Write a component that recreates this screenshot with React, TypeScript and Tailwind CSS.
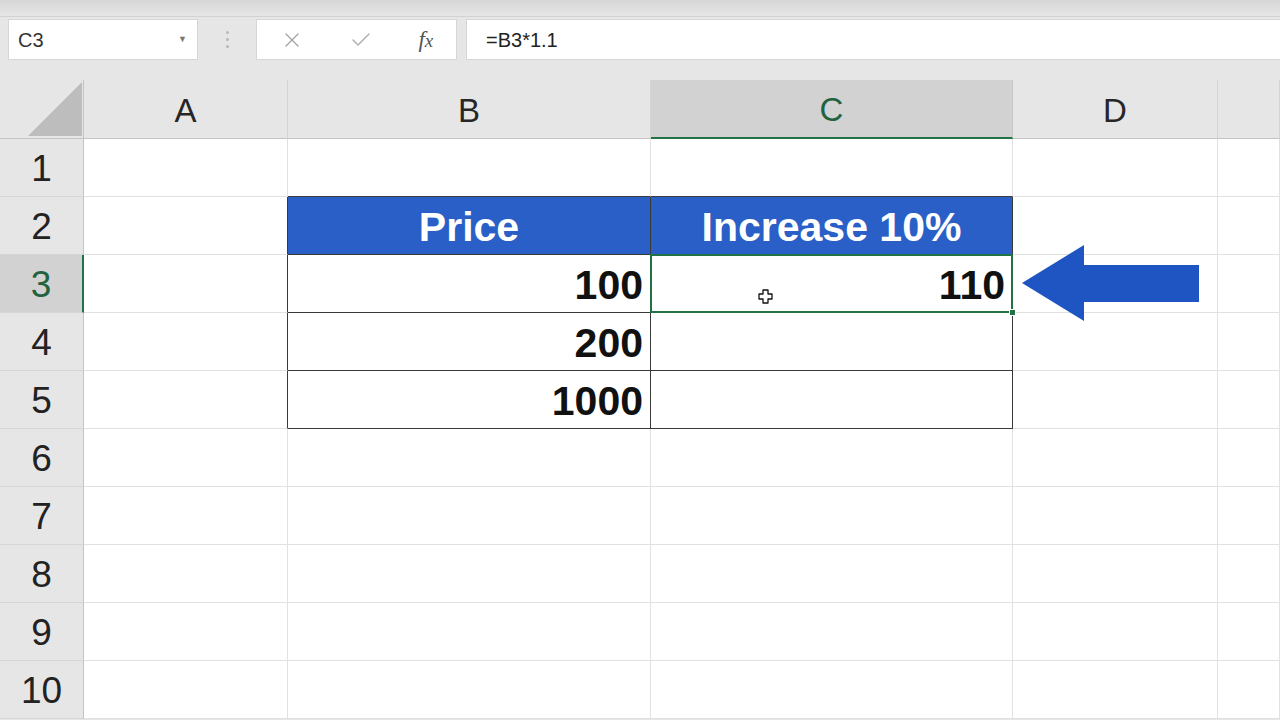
import React from 'react';
import clsx from 'clsx';
import { X, Check } from 'lucide-react';

const colLetters = ['A', 'B', 'C', 'D', ''];
const rows = [1, 2, 3, 4, 5, 6, 7, 8, 9, 10];

const values: Record<string, string> = {
    '2-2': 'Price',
    '2-3': 'Increase 10%',
    '3-2': '100',
    '3-3': '110',
    '4-2': '200',
    '5-2': '1000',
};

const CornerCell: React.FC = () => (
    <div className="relative bg-[#e6e6e6] border-r border-b border-[#c4c4c4]">
        <svg className="absolute left-0 top-0" width="84" height="59" viewBox="0 0 84 59">
            <polygon points="28,56 82,2 82,56" fill="#bdbdbd" />
        </svg>
    </div>
);

const ColumnHeader: React.FC<{ letter: string; selected: boolean }> = ({ letter, selected }) => (
    <div
        className={clsx(
            'flex items-center justify-center pt-[2px] text-[33px] leading-none border-r',
            selected
                ? 'bg-[#d2d2d2] text-[#22623f] border-r-[#c8c8c8] border-b-2 border-b-[#217346]'
                : 'bg-[#e6e6e6] text-[#262626] border-r-[#d4d4d4] border-b border-b-[#c4c4c4]'
        )}
    >
        {letter}
    </div>
);

const RowHeader: React.FC<{ n: number; selected: boolean }> = ({ n, selected }) => (
    <div
        className={clsx(
            'flex items-center justify-center pt-[2px] text-[37px] leading-none border-b border-b-[#d6d6d6]',
            selected
                ? 'bg-[#d2d2d2] text-[#22623f] border-r-2 border-r-[#217346]'
                : 'bg-[#e6e6e6] text-[#222] border-r border-r-[#c4c4c4]'
        )}
    >
        {n}
    </div>
);

const Cursor: React.FC = () => (
    <svg className="absolute left-[107px] top-[34px]" width="15" height="15" viewBox="0 0 15 15">
        <path
            d="M5 1h5v4h4v5h-4v4H5v-4H1V5h4z"
            fill="#fff"
            stroke="#111"
            strokeWidth="1.3"
            strokeLinejoin="round"
        />
    </svg>
);

const BodyCell: React.FC<{ r: number; c: number }> = ({ r, c }) => {
    const inTable = r >= 2 && r <= 5 && (c === 2 || c === 3);
    const rightDark = inTable || (c === 1 && r >= 2 && r <= 5);
    const bottomDark = inTable || (r === 1 && (c === 2 || c === 3));
    const isHead = r === 2 && inTable;
    const text = values[`${r}-${c}`];
    const selected = r === 3 && c === 3;

    return (
        <div
            className={clsx(
                'relative flex items-center pt-[4px] border-r border-b text-[41px] leading-none font-bold',
                rightDark ? 'border-r-[#3a3a3a]' : 'border-r-[#e1e1e1]',
                bottomDark ? 'border-b-[#3a3a3a]' : 'border-b-[#e1e1e1]',
                isHead ? 'bg-[#2a5fc7] text-white justify-center' : 'bg-white text-[#111] justify-end pr-[7px]',
                selected && 'z-10'
            )}
        >
            {text}
            {selected && (
                <>
                    <div className="absolute -left-px -top-px -right-px -bottom-px border-2 border-[#217346]" />
                    <div className="absolute -right-[4px] -bottom-[4px] w-[7px] h-[7px] bg-[#217346] border border-white" />
                    <Cursor />
                </>
            )}
        </div>
    );
};

const FormulaBar: React.FC = () => (
    <div className="h-[80px] flex flex-col">
        <div className="h-[17px] bg-gradient-to-b from-[#d6d6d6] to-[#e6e6e6] border-b border-[#d2d2d2]" />
        <div className="mt-[2px] h-[41px] flex items-stretch pl-[8px]">
            <div className="w-[190px] bg-white border border-[#d6d6d6] flex items-center justify-between pl-[9px] pr-[10px]">
                <span className="text-[20px] text-[#333]">C3</span>
                <span className="text-[9px] text-[#777]">▼</span>
            </div>
            <div className="w-[58px] flex flex-col items-center justify-center gap-[4px]">
                <span className="w-[3px] h-[3px] rounded-full bg-[#b8b8b8]" />
                <span className="w-[3px] h-[3px] rounded-full bg-[#b8b8b8]" />
                <span className="w-[3px] h-[3px] rounded-full bg-[#b8b8b8]" />
            </div>
            <div className="w-[201px] bg-white border border-[#d6d6d6] flex items-center justify-around">
                <X size={24} strokeWidth={1.4} color="#a5a5a5" />
                <Check size={24} strokeWidth={1.6} color="#b3b3b3" />
                <span className="font-['Liberation_Serif',serif] italic text-[23px] text-[#555] leading-none">
                    f<span className="text-[19px]">x</span>
                </span>
            </div>
            <div className="ml-[9px] flex-1 bg-white border border-r-0 border-[#d6d6d6] flex items-center pl-[19px]">
                <span className="text-[20px] text-[#222]">=B3*1.1</span>
            </div>
        </div>
    </div>
);

export default function App() {
    return (
        <div className="relative w-[1280px] h-[720px] overflow-hidden bg-[#e6e6e6] font-['Liberation_Sans',Arial,sans-serif]">
            <FormulaBar />
            <div className="grid grid-cols-[84px_204px_363px_362px_205px_1fr] grid-rows-[59px_repeat(10,58px)]">
                <CornerCell />
                {colLetters.map((l, i) => (
                    <ColumnHeader key={i} letter={l} selected={l === 'C'} />
                ))}
                {rows.map(r => (
                    <React.Fragment key={r}>
                        <RowHeader n={r} selected={r === 3} />
                        {[1, 2, 3, 4, 5].map(c => (
                            <BodyCell key={c} r={r} c={c} />
                        ))}
                    </React.Fragment>
                ))}
            </div>
            <svg className="absolute left-[1022px] top-[245px]" width="178" height="77" viewBox="0 0 178 77">
                <polygon points="0,38 62,0 62,20 177,20 177,57 62,57 62,76" fill="#1f55c2" />
            </svg>
        </div>
    );
}
